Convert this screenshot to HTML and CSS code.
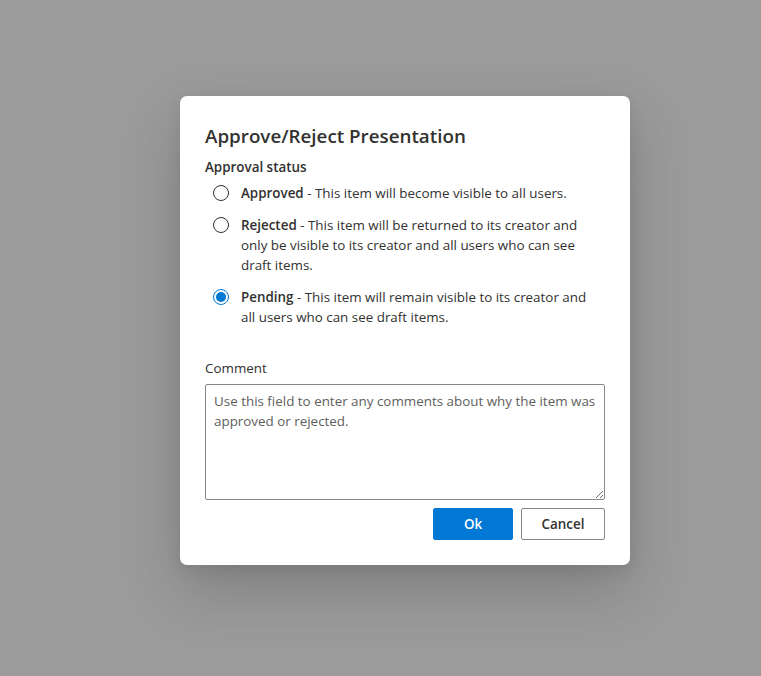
FILE: index.html
```html
<!DOCTYPE html>
<html>
<head>
<meta charset="utf-8">
<link rel="stylesheet" href="styles.css">
</head>
<body>
<div class="overlay">
  <div class="dialog">
    <h1 class="title">Approve/Reject Presentation</h1>
    <div class="group-label">Approval status</div>
    <div class="options">
      <label class="option">
        <span class="radio"></span>
        <span class="option-text"><b>Approved</b> - This item will become visible to all users.</span>
      </label>
      <label class="option">
        <span class="radio"></span>
        <span class="option-text"><b>Rejected</b> - This item will be returned to its creator and only be visible to its creator and all users who can see draft items.</span>
      </label>
      <label class="option">
        <span class="radio checked"></span>
        <span class="option-text"><b>Pending</b> - This item will remain visible to its creator and all users who can see draft items.</span>
      </label>
    </div>
    <div class="field-label">Comment</div>
    <textarea class="comment" placeholder="Use this field to enter any comments about why the item was approved or rejected."></textarea>
    <div class="actions">
      <button class="btn primary">Ok</button>
      <button class="btn secondary">Cancel</button>
    </div>
  </div>
</div>
</body>
</html>
```

FILE: styles.css
```css
html, body {
  margin: 0;
  padding: 0;
  height: 100%;
}
body {
  background: #9b9b9b;
  font-family: "Open Sans", "Noto Sans", sans-serif;
  color: #323130;
}
.overlay {
  height: 100%;
  padding-top: 96px;
  padding-left: 180px;
  box-sizing: border-box;
}
.dialog {
  width: 450px;
  box-sizing: border-box;
  background: #ffffff;
  border-radius: 7px;
  padding: 26px 25px 25px;
  box-shadow: 0 25px 60px rgba(0,0,0,0.18), 0 5px 15px rgba(0,0,0,0.08);
}
.title {
  margin: 0;
  font-size: 18.8px;
  line-height: 28px;
  font-weight: 600;
  color: #323130;
}
.group-label {
  margin-top: 7px;
  font-size: 13.4px;
  line-height: 20px;
  font-weight: 600;
}
.options {
  margin-top: 6px;
  display: flex;
  flex-direction: column;
  gap: 12px;
  padding-left: 8px;
}
.option {
  display: flex;
  align-items: flex-start;
  gap: 12px;
  font-size: 13.4px;
  line-height: 20px;
}
.option b {
  font-weight: 600;
}
.radio {
  flex: none;
  width: 16px;
  height: 16px;
  margin-top: 2px;
  box-sizing: border-box;
  border: 1px solid #323130;
  border-radius: 50%;
  position: relative;
}
.radio.checked {
  border-color: #0078d4;
}
.radio.checked::after {
  content: "";
  position: absolute;
  left: 2px;
  top: 2px;
  width: 10px;
  height: 10px;
  border-radius: 50%;
  background: #0078d4;
}
.option-text {
  padding-right: 10px;
}
.field-label {
  margin-top: 31px;
  font-size: 13.4px;
  line-height: 20px;
}
.comment {
  display: block;
  margin-top: 6px;
  width: 400px;
  height: 116px;
  box-sizing: border-box;
  border: 1px solid #8a8886;
  border-radius: 2px;
  padding: 6px 8px;
  font-family: inherit;
  font-size: 13.4px;
  line-height: 20px;
  color: #323130;
  resize: vertical;
}
.comment::placeholder {
  color: #605e5c;
}
.actions {
  margin-top: 8px;
  display: flex;
  justify-content: flex-end;
  gap: 8px;
}
.btn {
  height: 32px;
  box-sizing: border-box;
  border-radius: 2px;
  font-family: inherit;
  font-size: 13.4px;
  font-weight: 600;
  padding: 0 16px;
}
.primary {
  width: 80px;
  background: #0078d4;
  border: 1px solid #0078d4;
  color: #ffffff;
}
.secondary {
  width: 84px;
  background: #ffffff;
  border: 1px solid #8a8886;
  color: #323130;
}
```
